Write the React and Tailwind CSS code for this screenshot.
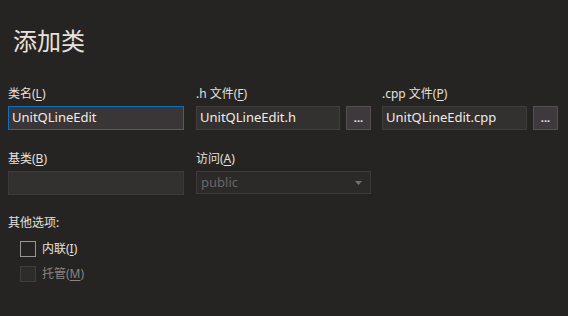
import React from "react";

const font = { fontFamily: '"Noto Sans", "Noto Sans CJK SC", sans-serif' };

const Label = ({ children, dim }) => (
  <div className={`text-[12px] leading-[16px] h-4 ${dim ? "text-[#8a8580]" : "text-[#e6e0da]"}`}>{children}</div>
);

const U = ({ children }) => <span className="underline underline-offset-2">{children}</span>;

const TextBox = ({ value, width, focused, disabled }) => (
  <div
    className={`h-[24px] flex items-center px-[3px] text-[13px] border ${
      focused
        ? "border-[#0e6fbf] bg-[#3a3536] text-[#f2ece6]"
        : disabled
        ? "border-[#3d3b3a] bg-[#333130]"
        : "border-[#403d3d] bg-[#333030] text-[#f2ece6]"
    }`}
    style={{ width }}
  >
    {value}
  </div>
);

const Browse = () => (
  <button className="h-[24px] w-[25px] ml-[6px] border border-[#55504f] bg-[#3d393c] text-[#f2ece6] text-[11px] leading-none flex items-center justify-center pb-[2px] font-bold">
    ...
  </button>
);

export default function App() {
  return (
    <div className="w-[568px] h-[316px] bg-[#252423] overflow-hidden select-none" style={font}>
      <div className="pl-[13px] pt-[27px] text-[24px] leading-[28px] text-[#e8e1db]">添加类</div>

      <div className="flex pl-[8px] mt-[31px]">
        <div className="w-[176px] flex flex-col gap-[4px]">
          <Label>类名(<U>L</U>)</Label>
          <TextBox value="UnitQLineEdit" width={176} focused />
        </div>
        <div className="ml-[12px] flex flex-col gap-[4px]">
          <Label>.h 文件(<U>F</U>)</Label>
          <div className="flex">
            <TextBox value="UnitQLineEdit.h" width={144} />
            <Browse />
          </div>
        </div>
        <div className="ml-[11px] flex flex-col gap-[4px]">
          <Label>.cpp 文件(<U>P</U>)</Label>
          <div className="flex">
            <TextBox value="UnitQLineEdit.cpp" width={145} />
            <Browse />
          </div>
        </div>
      </div>

      <div className="flex pl-[8px] mt-[21px]">
        <div className="w-[176px] flex flex-col gap-[4px]">
          <Label>基类(<U>B</U>)</Label>
          <TextBox value="" width={176} disabled />
        </div>
        <div className="ml-[12px] flex flex-col gap-[4px]">
          <Label>访问(<U>A</U>)</Label>
          <div className="w-[175px] h-[23px] border border-[#3d3b3a] bg-[#2b2a29] flex items-center justify-between pl-[4px] pr-[8px] text-[13px] text-[#6a6664]">
            <span>public</span>
            <svg width="7" height="4" viewBox="0 0 7 4">
              <path d="M0 0 L7 0 L3.5 4 Z" fill="#77716d" />
            </svg>
          </div>
        </div>
      </div>

      <div className="pl-[8px] mt-[20px]">
        <Label>其他选项:</Label>
        <div className="pl-[12px] mt-[10px] flex flex-col gap-[9px]">
          <div className="flex items-center gap-[6px]">
            <div className="w-4 h-4 border border-[#9a9591] bg-transparent" />
            <Label>内联(<U>I</U>)</Label>
          </div>
          <div className="flex items-center gap-[6px]">
            <div className="w-4 h-4 border border-[#403d3c] bg-[#2d2c2b]" />
            <Label dim>托管(<U>M</U>)</Label>
          </div>
        </div>
      </div>
    </div>
  );
}
